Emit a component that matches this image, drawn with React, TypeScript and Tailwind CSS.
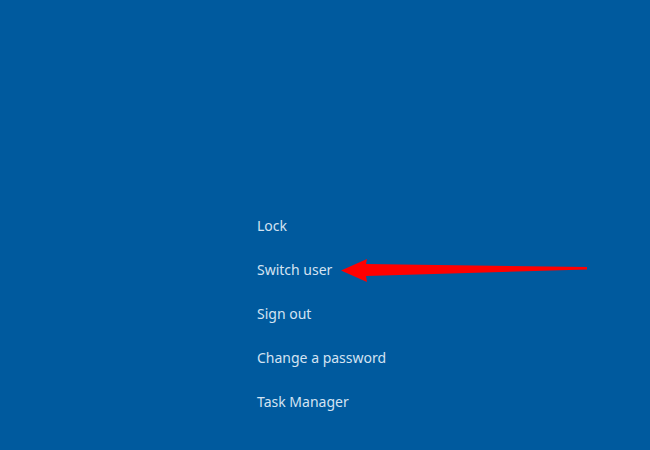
const items = ["Lock", "Switch user", "Sign out", "Change a password", "Task Manager"];

export default function App() {
  return (
    <div className="relative w-[650px] h-[450px] overflow-hidden bg-[#005a9e] font-['Noto_Sans','Open_Sans',sans-serif]">
      <ul className="flex flex-col pt-[203px] pl-[257px]">
        {items.map((label) => (
          <li key={label} className="h-[44px] flex items-center text-[14px] text-[#d4e3f2]">
            {label}
          </li>
        ))}
      </ul>
      <svg
        aria-hidden
        className="absolute left-0 top-0"
        width="650"
        height="450"
        viewBox="0 0 650 450"
      >
        <path
          d="M341 270.5 L367 259 L366 264 L587 267 L587 269.5 L366 276 L367 282 Z"
          fill="#ff0000"
        />
      </svg>
    </div>
  );
}
